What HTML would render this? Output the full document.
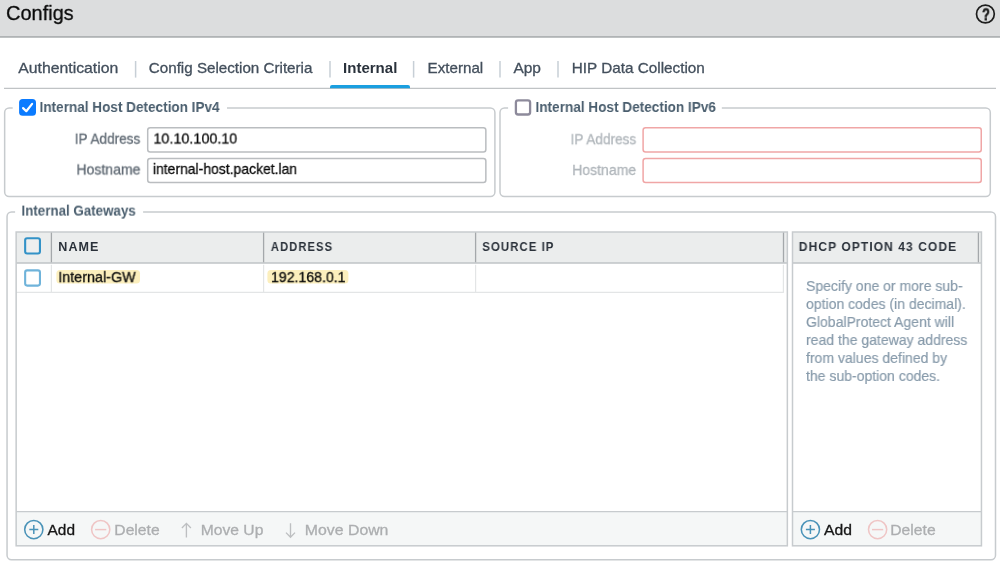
<!DOCTYPE html>
<html>
<head>
<meta charset="utf-8">
<title>Configs</title>
<style>
html,body{margin:0;padding:0;}
body{width:1000px;height:566px;position:relative;overflow:hidden;background:#fff;font-family:"Liberation Sans",sans-serif;}
#frame{position:absolute;left:0;top:0;}
.t{position:absolute;white-space:nowrap;transform-origin:0 50%;line-height:1;will-change:transform;}
.tab{font-size:15px;color:#434f5c;-webkit-text-stroke:.3px;}
.lg{font-size:15px;font-weight:bold;color:#4a5e6e;}
.lbl{font-size:14.5px;color:#606a74;-webkit-text-stroke:.3px;}
.lbl.dis{color:#b0b6bb;}
.val{font-size:14.5px;color:#0c0c0c;-webkit-text-stroke:.3px;}
.hd{font-size:12.5px;font-weight:bold;color:#2a313a;letter-spacing:1.1px;}
.cell{font-size:14.5px;color:#0c0c0c;-webkit-text-stroke:.3px;}
.btn{font-size:15px;color:#161616;-webkit-text-stroke:.3px;}
.btn.dis{color:#acaeb0;}
.help{position:absolute;transform:scaleX(.967);font-size:14.5px;line-height:18px;color:#889bab;-webkit-text-stroke:.2px;white-space:nowrap;transform-origin:0 0;will-change:transform;}
</style>
</head>
<body>
<svg id="frame" width="1000" height="566" viewBox="0 0 1000 566">
<rect x="0" y="0" width="1000" height="36" fill="#dcddde"/>
<rect x="0" y="36" width="1000" height="1.8" fill="#b0b3b5"/>
<path d="M4 88.4L996 88.4" stroke="#c0c3c5" stroke-width="1.4" fill="none"/>
<path d="M135.6 61L135.6 77.6" stroke="#c7cfd6" stroke-width="1.5" fill="none"/>
<path d="M330 61L330 77.6" stroke="#c7cfd6" stroke-width="1.5" fill="none"/>
<path d="M413.6 61L413.6 77.6" stroke="#c7cfd6" stroke-width="1.5" fill="none"/>
<path d="M500 61L500 77.6" stroke="#c7cfd6" stroke-width="1.5" fill="none"/>
<path d="M558 61L558 77.6" stroke="#c7cfd6" stroke-width="1.5" fill="none"/>
<path d="M330 88.2V87a2 2 0 0 1 2-2h76a2 2 0 0 1 2 2v1.2z" fill="#1a9fe0"/>
<rect x="4.66" y="108.0" width="490.24" height="88.55" rx="4.5" fill="none" stroke="#c7cbce" stroke-width="1.5"/>
<rect x="500.0" y="108.0" width="490.30" height="88.55" rx="4.5" fill="none" stroke="#c7cbce" stroke-width="1.5"/>
<rect x="7.05" y="212.0" width="988.45" height="347.85" rx="4.5" fill="none" stroke="#c7cbce" stroke-width="1.5"/>
<rect x="12.7" y="106" width="214.3" height="4" fill="#fff"/>
<rect x="508.1" y="106" width="213.7" height="4" fill="#fff"/>
<rect x="15.1" y="210" width="128" height="4" fill="#fff"/>
<rect x="147.7" y="127.7" width="338.15" height="24.30" rx="2.5" fill="#fff" stroke="#babdc0" stroke-width="1.5"/>
<rect x="147.7" y="158.6" width="338.15" height="23.90" rx="2.5" fill="#fff" stroke="#babdc0" stroke-width="1.5"/>
<rect x="643.0999999999999" y="127.7" width="338.15" height="24.30" rx="2.5" fill="#fff" stroke="#f0a6a6" stroke-width="1.5"/>
<rect x="643.0999999999999" y="158.6" width="338.15" height="23.90" rx="2.5" fill="#fff" stroke="#f0a6a6" stroke-width="1.5"/>
<rect x="16.15" y="232.0" width="771.20" height="31.00" fill="#ebeded"/>
<rect x="16.15" y="511.6" width="771.20" height="34.20" fill="#f5f7f7"/>
<path d="M16.15 511.6L787.35 511.6" stroke="#c7cbce" stroke-width="1.3" fill="none"/>
<path d="M16.15 263L787.35 263" stroke="#bfc3c6" stroke-width="1.6" fill="none"/>
<path d="M51.4 232.0L51.4 262.3" stroke="#a4a8ab" stroke-width="1.3" fill="none"/>
<path d="M263.6 232.0L263.6 262.3" stroke="#a4a8ab" stroke-width="1.3" fill="none"/>
<path d="M475.6 232.0L475.6 262.3" stroke="#a4a8ab" stroke-width="1.3" fill="none"/>
<path d="M783.5 232.0L783.5 262.3" stroke="#a4a8ab" stroke-width="1.3" fill="none"/>
<path d="M16.15 292.4L783.9 292.4" stroke="#e3e5e6" stroke-width="1.2" fill="none"/>
<path d="M783.4 264.8L783.4 292.1" stroke="#e3e5e6" stroke-width="1.2" fill="none"/>
<path d="M51.4 264.8L51.4 292.1" stroke="#e3e5e6" stroke-width="1.2" fill="none"/>
<path d="M263.6 264.8L263.6 292.1" stroke="#e3e5e6" stroke-width="1.2" fill="none"/>
<path d="M475.6 264.8L475.6 292.1" stroke="#e3e5e6" stroke-width="1.2" fill="none"/>
<rect x="16.15" y="232.0" width="771.20" height="313.80" rx="0" fill="none" stroke="#c7cbce" stroke-width="1.5"/>
<rect x="792.5" y="232.0" width="188.95" height="31.00" fill="#ebeded"/>
<rect x="792.5" y="511.6" width="188.95" height="34.20" fill="#f5f7f7"/>
<path d="M792.5 511.6L981.45 511.6" stroke="#c7cbce" stroke-width="1.3" fill="none"/>
<path d="M792.5 263L981.45 263" stroke="#bfc3c6" stroke-width="1.6" fill="none"/>
<path d="M978.4 232.0L978.4 262.3" stroke="#a4a8ab" stroke-width="1.3" fill="none"/>
<rect x="792.5" y="232.0" width="188.95" height="313.80" rx="0" fill="none" stroke="#c7cbce" stroke-width="1.5"/>
<rect x="56.4" y="270" width="83.6" height="13.6" rx="3.5" fill="#fcefbd"/>
<rect x="267.4" y="270" width="81" height="13.6" rx="3.5" fill="#fcefbd"/>
<rect x="19.1" y="99.0" width="16.9" height="16.8" rx="3.6" fill="#0b7bff"/>
<path d="M23.1 108.1L26.3 111.2L32.1 103.9" fill="none" stroke="#fff" stroke-width="2.2" stroke-linecap="round" stroke-linejoin="round"/>
<rect x="515.9" y="100.3" width="14.2" height="14.2" rx="2.2" fill="#fff" stroke="#8d8a9b" stroke-width="2.3"/>
<rect x="25.15" y="238.3" width="14.8" height="15.2" rx="2" fill="#eeefef" stroke="#3392c7" stroke-width="2.1"/>
<rect x="25.15" y="270.4" width="14.8" height="15.2" rx="2" fill="#fff" stroke="#6fb3da" stroke-width="2.1"/>
<circle cx="985.4" cy="14" r="8.9" fill="none" stroke="#1d1d1d" stroke-width="1.7"/>
<circle cx="33.8" cy="529.6" r="9.1" fill="none" stroke="#4a93b8" stroke-width="1.55"/><path d="M29.299999999999997 529.6H38.3M33.8 525.1V534.1" stroke="#4a93b8" stroke-width="1.5" fill="none"/>
<circle cx="100.7" cy="529.6" r="9.1" fill="none" stroke="#efc5c5" stroke-width="1.55"/><path d="M95.10000000000001 529.6H106.3" stroke="#efc5c5" stroke-width="1.5" fill="none"/>
<circle cx="810.4" cy="529.6" r="9.1" fill="none" stroke="#4a93b8" stroke-width="1.55"/><path d="M805.9 529.6H814.9M810.4 525.1V534.1" stroke="#4a93b8" stroke-width="1.5" fill="none"/>
<circle cx="877.6" cy="529.6" r="9.1" fill="none" stroke="#efc5c5" stroke-width="1.55"/><path d="M872.0 529.6H883.2" stroke="#efc5c5" stroke-width="1.5" fill="none"/>
<path d="M186.4 537.4V523.4M181.9 528L186.4 523.4L190.9 528" stroke="#bdbfc1" stroke-width="1.35" fill="none"/>
<path d="M290.5 523.2V537.2M286 532.6L290.5 537.2L295 532.6" stroke="#bdbfc1" stroke-width="1.35" fill="none"/>
</svg>
<span class="t" id="ttl" style="left:6px;transform:translate(0.06px,0.00px) scaleX(0.9962);top:3px;font-size:20px;color:#0a0a0a;-webkit-text-stroke:.3px;">Configs</span>
<span class="t" id="q" style="left:982px;transform:translate(0.10px,0.30px) scaleX(0.8000);top:7px;font-size:16px;font-weight:bold;color:#1a1a1a;-webkit-text-stroke:.6px;">?</span>
<span class="t tab" id="tb1" style="left:18px;transform:translate(0.17px,0.70px) scaleX(1.0532);top:59px;">Authentication</span>
<span class="t tab" id="tb2" style="left:148px;transform:translate(0.81px,0.70px) scaleX(1.0115);top:59px;">Config Selection Criteria</span>
<span class="t tab" id="tb3" style="left:343px;transform:translate(0.08px,0.70px) scaleX(1.0010);top:59px;font-weight:bold;color:#2a323c;-webkit-text-stroke:0;">Internal</span>
<span class="t tab" id="tb4" style="left:427px;transform:translate(0.55px,0.70px) scaleX(1.0112);top:59px;">External</span>
<span class="t tab" id="tb5" style="left:513px;transform:translate(0.43px,0.70px) scaleX(1.0317);top:59px;">App</span>
<span class="t tab" id="tb6" style="left:571px;transform:translate(0.76px,0.70px) scaleX(1.0186);top:59px;">HIP Data Collection</span>
<span class="t lg" id="lg1" style="left:39px;transform:translate(0.54px,0.00px) scaleX(0.9040);top:99px;">Internal Host Detection IPv4</span>
<span class="t lg" id="lg2" style="left:535px;transform:translate(0.49px,0.00px) scaleX(0.9060);top:99px;">Internal Host Detection IPv6</span>
<span class="t lg" id="lg3" style="left:21px;transform:translate(0.46px,0.60px) scaleX(0.8905);top:202px;">Internal Gateways</span>
<span class="t lbl" id="l1" style="left:74px;transform:translate(0.69px,0.70px) scaleX(0.9398);top:131px;">IP Address</span>
<span class="t lbl" id="l2" style="left:76px;transform:translate(0.40px,0.50px) scaleX(0.9682);top:162px;">Hostname</span>
<span class="t lbl dis" id="l3" style="left:570px;transform:translate(0.50px,0.20px) scaleX(0.9412);top:132px;">IP Address</span>
<span class="t lbl dis" id="l4" style="left:572px;transform:translate(0.12px,0.00px) scaleX(0.9685);top:163px;">Hostname</span>
<span class="t val" id="v1" style="left:153px;transform:translate(0.44px,0.50px) scaleX(0.9899);top:131px;">10.10.100.10</span>
<span class="t val" id="v2" style="left:152px;transform:translate(0.85px,0.00px) scaleX(0.9623);top:162px;">internal-host.packet.lan</span>
<span class="t hd" id="h1" style="left:58px;transform:translate(0.24px,0.00px) scaleX(1.0036);top:241px;">NAME</span>
<span class="t hd" id="h2" style="left:270px;transform:translate(0.81px,0.00px) scaleX(0.9035);top:241px;">ADDRESS</span>
<span class="t hd" id="h3" style="left:482px;transform:translate(0.25px,0.00px) scaleX(0.9168);top:241px;">SOURCE IP</span>
<span class="t hd" id="h4" style="left:798px;transform:translate(0.76px,0.00px) scaleX(0.9633);top:241px;">DHCP OPTION 43 CODE</span>
<span class="t cell" id="c1" style="left:58px;transform:translate(0.30px,0.10px) scaleX(0.9893);top:270px;">Internal-GW</span>
<span class="t cell" id="c2" style="left:270px;transform:translate(0.96px,0.10px) scaleX(0.9736);top:270px;">192.168.0.1</span>
<span class="t btn" id="b1" style="left:47px;transform:translate(0.54px,0.90px) scaleX(1.0295);top:521px;">Add</span>
<span class="t btn dis" id="b2" style="left:114px;transform:translate(0.33px,0.90px) scaleX(1.0437);top:521px;">Delete</span>
<span class="t btn dis" id="b3" style="left:200px;transform:translate(0.76px,0.90px) scaleX(1.0432);top:521px;">Move Up</span>
<span class="t btn dis" id="b4" style="left:304px;transform:translate(0.86px,0.90px) scaleX(1.0550);top:521px;">Move Down</span>
<span class="t btn" id="b5" style="left:823px;transform:translate(0.93px,0.90px) scaleX(1.0466);top:521px;">Add</span>
<span class="t btn dis" id="b6" style="left:890px;transform:translate(0.28px,0.90px) scaleX(1.0454);top:521px;">Delete</span>
<div class="help" id="hp" style="left:806px;top:277px;">Specify one or more sub-<br>option codes (in decimal).<br>GlobalProtect Agent will<br>read the gateway address<br>from values defined by<br>the sub-option codes.</div>
</body>
</html>
